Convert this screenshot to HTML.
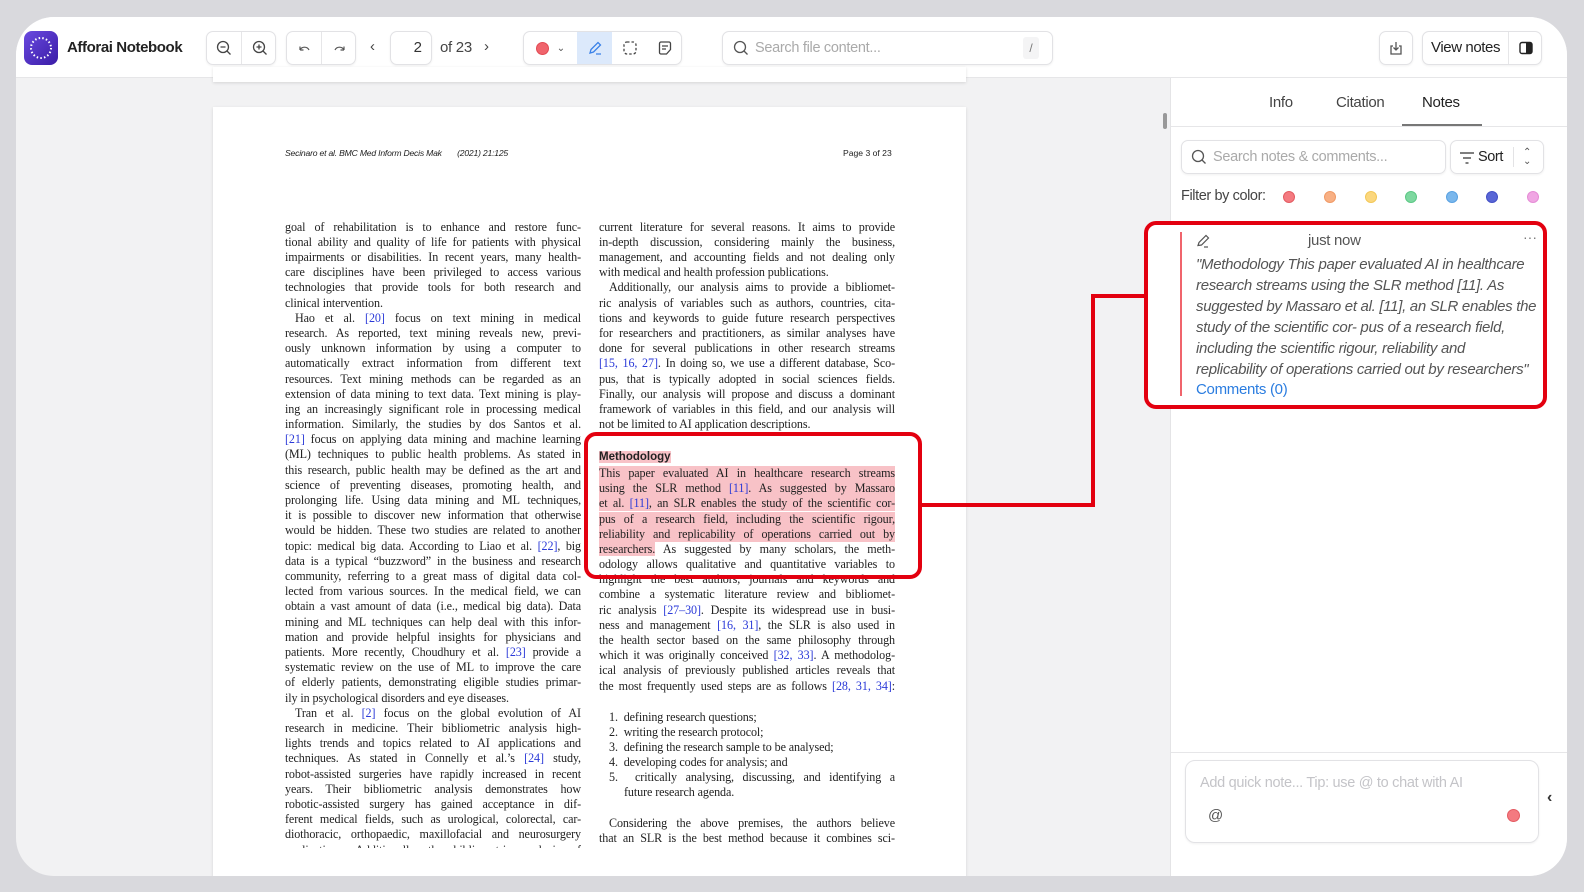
<!DOCTYPE html>
<html><head><meta charset="utf-8"><style>
*{box-sizing:border-box;margin:0;padding:0}
body{width:1584px;height:892px;background:#d9d9dd;font-family:"Liberation Sans",sans-serif;position:relative;overflow:hidden}
.frame{position:absolute;left:16px;top:17px;width:1551px;height:859px;background:#f2f2f3;border-radius:38px;overflow:hidden}
.top{position:absolute;left:0;top:0;width:100%;height:61px;background:#fff;border-bottom:1px solid #e6e6e8}
.abs{position:absolute}
.btn{position:absolute;top:14px;height:34px;border:1px solid #e2e2e5;border-radius:7px;background:#fff;box-shadow:0 1px 2px rgba(0,0,0,.06)}
.ic{position:absolute;top:0;height:32px;display:flex;align-items:center;justify-content:center}
.page{position:absolute;background:#fff;box-shadow:0 1px 3px rgba(0,0,0,.12)}
.l{position:absolute;font-family:"Liberation Serif",serif;font-size:12.1px;letter-spacing:-.1px;line-height:15px;height:15px;color:#222;text-align:justify;text-align-last:justify;white-space:nowrap;overflow:visible;transform:translateY(3px)}
.L{left:72px;width:296px}
.R{left:386px;width:296px}
.nl{text-align-last:left}
a,.c{color:#2b3ad8;text-decoration:none}
.hl{background:rgba(240,120,130,.45)}
.panel{position:absolute;left:1154px;top:61px;width:397px;height:798px;background:#fff;border-left:1px solid #e4e4e6}
.dot{position:absolute;top:113px;width:12px;height:12px;border-radius:50%}
.nt{position:absolute;left:1196px;font-size:15px;font-style:italic;color:#555;line-height:21px;letter-spacing:-.3px;white-space:nowrap}
</style></head><body>
<div class="frame">
 <div class="top">
  <div class="abs" style="left:8px;top:14px;width:34px;height:34px;border-radius:8px;background:linear-gradient(135deg,#6a4ae0,#3a1ca6)">
   <svg width="34" height="34" viewBox="0 0 34 34"><circle cx="17" cy="17" r="10" fill="none" stroke="#fff" stroke-width="2" stroke-dasharray="1.5 2.2"/></svg>
  </div>
  <div class="abs" style="left:51px;top:22px;font-size:15px;font-weight:bold;color:#222;letter-spacing:-.4px">Afforai Notebook</div>
  <div class="btn" style="left:190px;width:70px"><div class="ic" style="left:0;width:35px;border-right:1px solid #e6e6e8"><svg width="16" height="16" viewBox="0 0 16 16" fill="none" stroke="#444" stroke-width="1.3"><circle cx="7" cy="7" r="5.5"/><path d="M4.5 7h5M11 11l3.5 3.5"/></svg></div><div class="ic" style="left:35px;width:35px"><svg width="16" height="16" viewBox="0 0 16 16" fill="none" stroke="#444" stroke-width="1.3"><circle cx="7" cy="7" r="5.5"/><path d="M4.5 7h5M7 4.5v5M11 11l3.5 3.5"/></svg></div></div>
  <div class="btn" style="left:270px;width:70px"><div class="ic" style="left:0;width:35px;border-right:1px solid #e6e6e8"><svg width="14" height="14" viewBox="0 0 14 14" fill="none" stroke="#555" stroke-width="1.2"><path d="M3 9a5 5 0 0 1 9 0M3 9V5.5M3 9h3.5"/></svg></div><div class="ic" style="left:35px;width:35px"><svg width="14" height="14" viewBox="0 0 14 14" fill="none" stroke="#555" stroke-width="1.2"><path d="M11 9a5 5 0 0 0-9 0M11 9V5.5M11 9H7.5"/></svg></div></div>
  <div class="abs" style="left:354px;top:21px;font-size:15px;color:#444">‹</div>
  <div class="btn" style="left:374px;width:42px;text-align:right;padding-right:9px;font-size:15px;line-height:32px;color:#333">2</div>
  <div class="abs" style="left:424px;top:22px;font-size:15px;color:#444;letter-spacing:-.3px">of 23</div>
  <div class="abs" style="left:468px;top:21px;font-size:15px;color:#444">›</div>
  <div class="btn" style="left:507px;width:159px;overflow:hidden">
   <div class="ic" style="left:0;width:53px"><span style="width:13px;height:13px;border-radius:50%;background:#f0646c;border:1px solid #e24a53;display:inline-block"></span><span style="font-size:10px;color:#555;margin-left:8px">⌄</span></div>
   <div class="ic" style="left:53px;width:35px;background:#dce9fb"><svg width="16" height="16" viewBox="0 0 16 16" fill="none" stroke="#3b82e8" stroke-width="1.3"><path d="M3 13l1-3.5L11 2.5l2.5 2.5L6.5 12z"/><path d="M9 14h5"/></svg></div>
   <div class="ic" style="left:88px;width:35px"><svg width="16" height="16" viewBox="0 0 16 16" fill="none" stroke="#444" stroke-width="1.3" stroke-dasharray="2.5 2"><rect x="2" y="2" width="12" height="12" rx="3"/></svg></div>
   <div class="ic" style="left:123px;width:35px"><svg width="16" height="16" viewBox="0 0 16 16" fill="none" stroke="#444" stroke-width="1.3"><path d="M2.5 3.5a1.5 1.5 0 0 1 1.5-1.5h8a1.5 1.5 0 0 1 1.5 1.5v6L9.5 14H4a1.5 1.5 0 0 1-1.5-1.5z"/><path d="M5 6h6M5 9h4"/></svg></div>
  </div>
  <div class="btn" style="left:706px;width:331px"><svg class="abs" style="left:10px;top:8px" width="16" height="16" viewBox="0 0 16 16" fill="none" stroke="#555" stroke-width="1.3"><circle cx="7" cy="7" r="5.5"/><path d="M11 11l3.5 3.5"/></svg><span class="abs" style="left:32px;top:8px;font-size:14.5px;color:#aaa;letter-spacing:-.3px">Search file content...</span><span class="abs" style="left:300px;top:5px;width:16px;height:22px;background:#f4f4f5;border-radius:3px;font-size:12px;color:#777;text-align:center;line-height:22px">/</span></div>
  <div class="btn" style="left:1363px;width:34px"><div class="ic" style="left:0;width:32px"><svg width="16" height="16" viewBox="0 0 16 16" fill="none" stroke="#555" stroke-width="1.3"><path d="M5 6H3v8h10V6h-2M8 2v8M5.5 7.5L8 10l2.5-2.5"/></svg></div></div>
  <div class="btn" style="left:1406px;width:120px"><span class="abs" style="left:8px;top:7px;font-size:15px;color:#222;letter-spacing:-.4px">View notes</span><div class="ic" style="left:85px;width:34px;border-left:1px solid #e6e6e8"><svg width="16" height="16" viewBox="0 0 16 16"><rect x="2" y="2.5" width="12" height="11" rx="2" fill="none" stroke="#222" stroke-width="1.4"/><rect x="8" y="2.5" width="6" height="11" fill="#222"/></svg></div></div>
 </div>

 <div class="page" style="left:197px;top:50px;width:753px;height:15px"></div>
 <div class="page" style="left:197px;top:90px;width:753px;height:780px">
  <div class="abs" style="left:72px;top:41px;font-size:8.6px;font-style:italic;color:#222;letter-spacing:-.2px">Secinaro <i>et al.</i> BMC Med Inform Decis Mak &nbsp;&nbsp;&nbsp;&nbsp;&nbsp;&nbsp;(2021) 21:125</div>
  <div class="abs" style="left:630px;top:41px;font-size:8.6px;color:#222">Page 3 of 23</div>
  <div class="l L" style="top:110px">goal of rehabilitation is to enhance and restore func-</div>
  <div class="l L" style="top:125px">tional ability and quality of life for patients with physical</div>
  <div class="l L" style="top:140px">impairments or disabilities. In recent years, many health-</div>
  <div class="l L" style="top:155px">care disciplines have been privileged to access various</div>
  <div class="l L" style="top:170px">technologies that provide tools for both research and</div>
  <div class="l L nl" style="top:186px">clinical intervention.</div>
  <div class="l L" style="top:201px;padding-left:10px">Hao et al. <a>[20]</a> focus on text mining in medical</div>
  <div class="l L" style="top:216px">research. As reported, text mining reveals new, previ-</div>
  <div class="l L" style="top:231px">ously unknown information by using a computer to</div>
  <div class="l L" style="top:246px">automatically extract information from different text</div>
  <div class="l L" style="top:262px">resources. Text mining methods can be regarded as an</div>
  <div class="l L" style="top:277px">extension of data mining to text data. Text mining is play-</div>
  <div class="l L" style="top:292px">ing an increasingly significant role in processing medical</div>
  <div class="l L" style="top:307px">information. Similarly, the studies by dos Santos et al.</div>
  <div class="l L" style="top:322px"><a>[21]</a> focus on applying data mining and machine learning</div>
  <div class="l L" style="top:337px">(ML) techniques to public health problems. As stated in</div>
  <div class="l L" style="top:353px">this research, public health may be defined as the art and</div>
  <div class="l L" style="top:368px">science of preventing diseases, promoting health, and</div>
  <div class="l L" style="top:383px">prolonging life. Using data mining and ML techniques,</div>
  <div class="l L" style="top:398px">it is possible to discover new information that otherwise</div>
  <div class="l L" style="top:413px">would be hidden. These two studies are related to another</div>
  <div class="l L" style="top:429px">topic: medical big data. According to Liao et al. <a>[22]</a>, big</div>
  <div class="l L" style="top:444px">data is a typical “buzzword” in the business and research</div>
  <div class="l L" style="top:459px">community, referring to a great mass of digital data col-</div>
  <div class="l L" style="top:474px">lected from various sources. In the medical field, we can</div>
  <div class="l L" style="top:489px">obtain a vast amount of data (i.e., medical big data). Data</div>
  <div class="l L" style="top:505px">mining and ML techniques can help deal with this infor-</div>
  <div class="l L" style="top:520px">mation and provide helpful insights for physicians and</div>
  <div class="l L" style="top:535px">patients. More recently, Choudhury et al. <a>[23]</a> provide a</div>
  <div class="l L" style="top:550px">systematic review on the use of ML to improve the care</div>
  <div class="l L" style="top:565px">of elderly patients, demonstrating eligible studies primar-</div>
  <div class="l L nl" style="top:581px">ily in psychological disorders and eye diseases.</div>
  <div class="l L" style="top:596px;padding-left:10px">Tran et al. <a>[2]</a> focus on the global evolution of AI</div>
  <div class="l L" style="top:611px">research in medicine. Their bibliometric analysis high-</div>
  <div class="l L" style="top:626px">lights trends and topics related to AI applications and</div>
  <div class="l L" style="top:641px">techniques. As stated in Connelly et al.’s <a>[24]</a> study,</div>
  <div class="l L" style="top:657px">robot-assisted surgeries have rapidly increased in recent</div>
  <div class="l L" style="top:672px">years. Their bibliometric analysis demonstrates how</div>
  <div class="l L" style="top:687px">robotic-assisted surgery has gained acceptance in dif-</div>
  <div class="l L" style="top:702px">ferent medical fields, such as urological, colorectal, car-</div>
  <div class="l L" style="top:717px">diothoracic, orthopaedic, maxillofacial and neurosurgery</div>
  <div class="l L" style="top:733px;height:5px;overflow:hidden">applications. Additionally, the bibliometric analysis of</div>

  <div class="l R" style="top:110px">current literature for several reasons. It aims to provide</div>
  <div class="l R" style="top:125px">in-depth discussion, considering mainly the business,</div>
  <div class="l R" style="top:140px">management, and accounting fields and not dealing only</div>
  <div class="l R nl" style="top:155px">with medical and health profession publications.</div>
  <div class="l R" style="top:170px;padding-left:10px">Additionally, our analysis aims to provide a bibliomet-</div>
  <div class="l R" style="top:186px">ric analysis of variables such as authors, countries, cita-</div>
  <div class="l R" style="top:201px">tions and keywords to guide future research perspectives</div>
  <div class="l R" style="top:216px">for researchers and practitioners, as similar analyses have</div>
  <div class="l R" style="top:231px">done for several publications in other research streams</div>
  <div class="l R" style="top:246px"><a>[15, 16, 27]</a>. In doing so, we use a different database, Sco-</div>
  <div class="l R" style="top:262px">pus, that is typically adopted in social sciences fields.</div>
  <div class="l R" style="top:277px">Finally, our analysis will propose and discuss a dominant</div>
  <div class="l R" style="top:292px">framework of variables in this field, and our analysis will</div>
  <div class="l R nl" style="top:307px">not be limited to AI application descriptions.</div>
  <div class="abs" style="left:386px;top:343px;font-size:11.5px;font-weight:bold;color:#222;line-height:14px"><span class="hl">Methodology</span></div>
  <div class="l R hl" style="top:356px">This paper evaluated AI in healthcare research streams</div>
  <div class="l R hl" style="top:371px">using the SLR method <a>[11]</a>. As suggested by Massaro</div>
  <div class="l R hl" style="top:386px">et al. <a>[11]</a>, an SLR enables the study of the scientific cor-</div>
  <div class="l R hl" style="top:402px">pus of a research field, including the scientific rigour,</div>
  <div class="l R hl" style="top:417px">reliability and replicability of operations carried out by</div>
  <div class="l R" style="top:432px"><span class="hl">researchers.</span> As suggested by many scholars, the meth-</div>
  <div class="l R" style="top:447px">odology allows qualitative and quantitative variables to</div>
  <div class="l R" style="top:462px">highlight the best authors, journals and keywords and</div>
  <div class="l R" style="top:477px">combine a systematic literature review and bibliomet-</div>
  <div class="l R" style="top:493px">ric analysis <a>[27–30]</a>. Despite its widespread use in busi-</div>
  <div class="l R" style="top:508px">ness and management <a>[16, 31]</a>, the SLR is also used in</div>
  <div class="l R" style="top:523px">the health sector based on the same philosophy through</div>
  <div class="l R" style="top:538px">which it was originally conceived <a>[32, 33]</a>. A methodolog-</div>
  <div class="l R" style="top:553px">ical analysis of previously published articles reveals that</div>
  <div class="l R" style="top:569px">the most frequently used steps are as follows <a>[28, 31, 34]</a>:</div>
  <div class="l R nl" style="top:600px;left:396px">1.&nbsp; defining research questions;</div>
  <div class="l R nl" style="top:615px;left:396px">2.&nbsp; writing the research protocol;</div>
  <div class="l R nl" style="top:630px;left:396px">3.&nbsp; defining the research sample to be analysed;</div>
  <div class="l R nl" style="top:645px;left:396px">4.&nbsp; developing codes for analysis; and</div>
  <div class="l R" style="top:660px;left:396px;width:286px">5.&nbsp; critically analysing, discussing, and identifying a</div>
  <div class="l R nl" style="top:675px;left:411px">future research agenda.</div>
  <div class="l R" style="top:706px;padding-left:10px">Considering the above premises, the authors believe</div>
  <div class="l R" style="top:721px">that an SLR is the best method because it combines sci-</div>
 </div>
 <div class="abs" style="left:1147px;top:96px;width:4px;height:16px;border-radius:2px;background:#999"></div>

 <div class="panel">
  <div class="abs" style="left:98px;top:16px;font-size:15px;color:#444;letter-spacing:-.3px">Info</div>
  <div class="abs" style="left:165px;top:16px;font-size:15px;color:#444;letter-spacing:-.3px">Citation</div>
  <div class="abs" style="left:251px;top:16px;font-size:15px;color:#222;letter-spacing:-.3px">Notes</div>
  <div class="abs" style="left:231px;top:46px;width:80px;height:2px;background:#777"></div>
  <div class="abs" style="left:0;top:48px;width:100%;height:1px;background:#e6e6e8"></div>
  <div class="abs" style="left:10px;top:62px;width:265px;height:34px;border:1px solid #e2e2e5;border-radius:7px;box-shadow:0 1px 2px rgba(0,0,0,.06)"><svg class="abs" style="left:9px;top:8px" width="16" height="16" viewBox="0 0 16 16" fill="none" stroke="#555" stroke-width="1.3"><circle cx="7" cy="7" r="5.5"/><path d="M11 11l3.5 3.5"/></svg><span class="abs" style="left:31px;top:8px;font-size:14.5px;color:#aaa;letter-spacing:-.3px">Search notes &amp; comments...</span></div>
  <div class="abs" style="left:279px;top:62px;width:94px;height:34px;border:1px solid #e2e2e5;border-radius:7px;box-shadow:0 1px 2px rgba(0,0,0,.06)"><svg class="abs" style="left:8px;top:10px" width="16" height="14" viewBox="0 0 16 14" fill="none" stroke="#333" stroke-width="1.3"><path d="M1 2h14M4 7h8M6.5 12h3"/></svg><span class="abs" style="left:27px;top:8px;font-size:14.5px;color:#222;letter-spacing:-.4px">Sort</span><span class="abs" style="left:62px;top:6px;width:1px;height:20px;background:#e3e3e5"></span><span class="abs" style="left:72px;top:7px;font-size:10px;color:#555;line-height:9px">⌃<br>⌄</span></div>
  <div class="abs" style="left:10px;top:110px;font-size:14.5px;color:#444;letter-spacing:-.4px">Filter by color:</div>
  <div class="dot" style="left:112px;background:#f47a80;border:1px solid #e35b62"></div>
  <div class="dot" style="left:153px;background:#f8b084;border:1px solid #f09a66"></div>
  <div class="dot" style="left:194px;background:#fbd77e;border:1px solid #f3c858"></div>
  <div class="dot" style="left:234px;background:#7ed8a0;border:1px solid #5cc885"></div>
  <div class="dot" style="left:275px;background:#7ab7ec;border:1px solid #5aa2e2"></div>
  <div class="dot" style="left:315px;background:#5966d6;border:1px solid #4350c6"></div>
  <div class="dot" style="left:356px;background:#f0a6e3;border:1px solid #e58cd6"></div>
  <div class="abs" style="left:0;top:674px;width:100%;height:1px;background:#e6e6e8"></div>
  <div class="abs" style="left:14px;top:682px;width:354px;height:83px;border:1px solid #e2e2e5;border-radius:10px;box-shadow:0 1px 2px rgba(0,0,0,.06)"><span class="abs" style="left:14px;top:14px;font-size:14.5px;color:#c4c4c8;letter-spacing:-.3px">Add quick note... Tip: use @ to chat with AI</span><span class="abs" style="left:22px;top:46px;font-size:15px;color:#555">@</span><span class="abs" style="left:321px;top:48px;width:13px;height:13px;border-radius:50%;background:#f47a80;border:1px solid #e35b62"></span></div>
  <div class="abs" style="left:376px;top:711px;font-size:16px;color:#333;font-weight:bold">‹</div>
 </div>
</div>

<div class="abs" style="left:584px;top:432px;width:338px;height:147px;border:4px solid #e3000f;border-radius:12px"></div>
<div class="abs" style="left:922px;top:503px;width:173px;height:4px;background:#e3000f"></div>
<div class="abs" style="left:1091px;top:294px;width:4px;height:213px;background:#e3000f"></div>
<div class="abs" style="left:1091px;top:294px;width:55px;height:4px;background:#e3000f"></div>
<div class="abs" style="left:1144px;top:221px;width:403px;height:188px;border:4px solid #e3000f;border-radius:12px;background:#fff"></div>
<div class="abs" style="left:1180px;top:232px;width:2px;height:164px;background:#f0646c"></div>
<svg class="abs" style="left:1195px;top:233px" width="16" height="16" viewBox="0 0 16 16" fill="none" stroke="#555" stroke-width="1.2"><path d="M3 12.5l1-3L11 2.5l2.5 2.5-7 7z"/><path d="M9 14h4"/></svg>
<div class="abs" style="left:1308px;top:232px;font-size:15px;color:#555;letter-spacing:-.3px">just now</div>
<div class="abs" style="left:1523px;top:229px;font-size:14px;color:#777">···</div>
<div class="nt" style="top:254px">"Methodology This paper evaluated AI in healthcare</div>
<div class="nt" style="top:275px">research streams using the SLR method [11]. As</div>
<div class="nt" style="top:296px">suggested by Massaro et al. [11], an SLR enables the</div>
<div class="nt" style="top:317px">study of the scientific cor- pus of a research field,</div>
<div class="nt" style="top:338px">including the scientific rigour, reliability and</div>
<div class="nt" style="top:359px">replicability of operations carried out by researchers"</div>
<div class="abs" style="left:1196px;top:381px;font-size:15px;color:#2b7de0;letter-spacing:-.3px">Comments (0)</div>
</body></html>
